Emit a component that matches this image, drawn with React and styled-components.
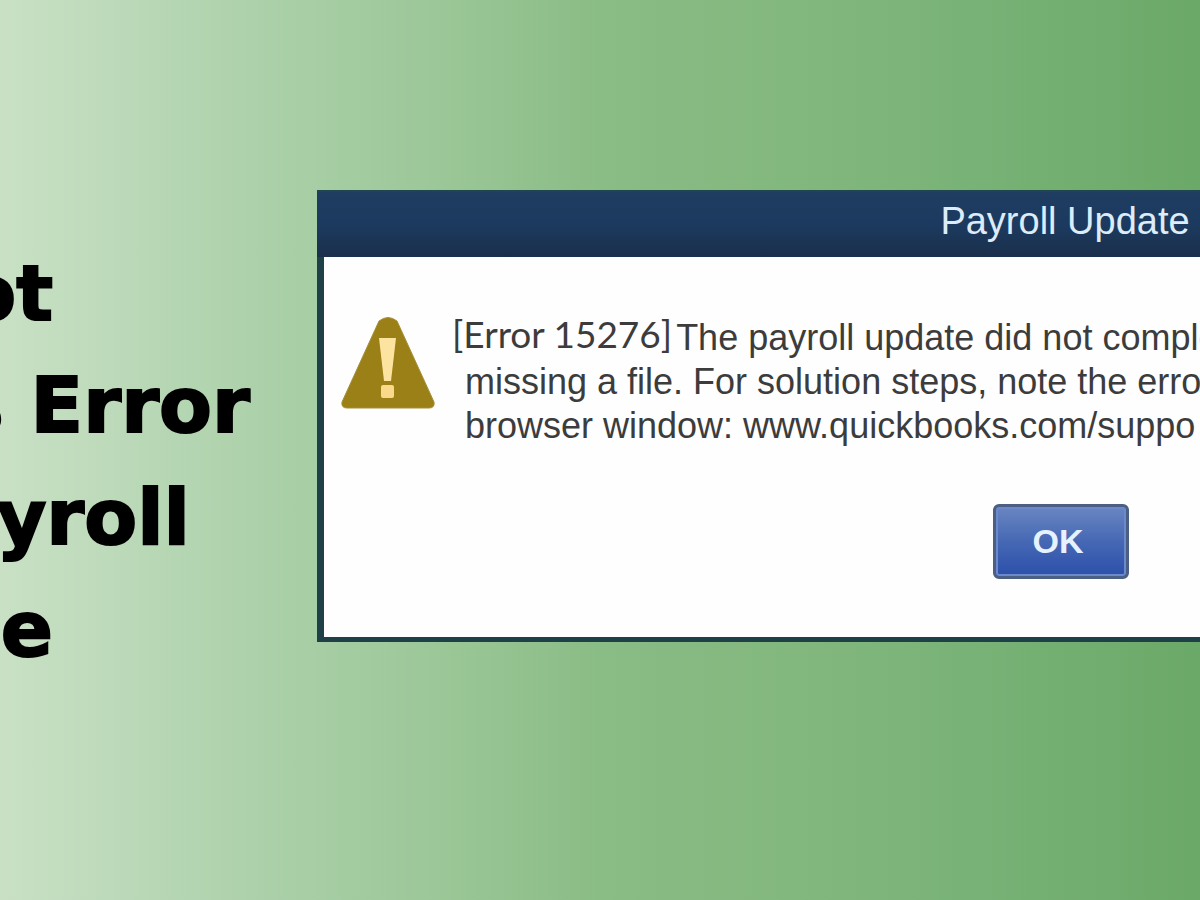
import React from 'react';
import styled, { createGlobalStyle } from 'styled-components';

const GlobalStyle = createGlobalStyle`
  * {
    box-sizing: border-box;
  }

  body {
    margin: 0;
  }
`;

const Banner = styled.main`
  display: flex;
  align-items: flex-start;
  min-height: 100vh;
  overflow: hidden;
  background: linear-gradient(
    to right,
    #c9e0c5 0%,
    #b9d8b6 12%,
    #a9cfa7 24%,
    #9ac696 38%,
    #8abc85 50%,
    #80b67c 70%,
    #75b073 86%,
    #6ba968 100%
  );
`;

const Headline = styled.h1`
  flex: none;
  display: flex;
  flex-direction: column;
  align-items: flex-start;
  width: 317px;
  margin: 0;
  padding-top: 238px;
  overflow: hidden;
  color: #000;
  font-family: 'DejaVu Sans', sans-serif;
  font-size: 77px;
  font-weight: 700;
  line-height: 112px;
  -webkit-text-stroke: 2px #000;
`;

const HeadlineLine = styled.span`
  display: flex;
  justify-content: flex-end;
  width: ${(props) => props.$width}px;
  white-space: pre;
`;

const Dialog = styled.section`
  flex: none;
  width: 124vw;
  margin-top: 190px;
  border: solid #1f4046;
  border-width: 0 7px 5px;
  background: #fefefe;
  font-family: 'Liberation Sans', Arial, sans-serif;
`;

const TitleBar = styled.header`
  margin: 0 -7px;
  padding: 8px 0 14px;
  border-top: 2px solid #1f4650;
  background: linear-gradient(#1e3d61, #1c3a5f 50%, #1b2f4b);
`;

const Title = styled.h2`
  margin: 0;
  padding-left: 8px;
  color: #dcecfb;
  font-size: 38px;
  font-weight: 400;
  line-height: 43px;
  text-align: center;
`;

const Content = styled.div`
  display: flex;
  align-items: flex-start;
  gap: 16px;
  padding: 59px 16px 0;
`;

const WarningIcon = styled.svg`
  flex: none;
  width: 96px;
  height: 94px;
`;

const Message = styled.p`
  margin: 0;
  padding-left: 13px;
  color: #3c3c3c;
  font-size: 36px;
  line-height: 44px;
  white-space: nowrap;
`;

const MessageLine = styled.span`
  display: flex;
  align-items: flex-start;
  gap: 4px;
  margin-left: ${(props) => (props.$outdent ? '-13px' : '0')};
`;

const ErrorCode = styled.span`
  font-family: Lato, 'Liberation Sans', sans-serif;
  font-size: 37px;
  line-height: 36px;
`;

const Actions = styled.footer`
  display: flex;
  justify-content: center;
  padding: 56px 0 58px;
`;

const OkButton = styled.button`
  width: 136px;
  height: 75px;
  padding: 0 6px 0 0;
  border: 3px solid #4a5f83;
  border-radius: 6px;
  background: linear-gradient(#6a86c2, #4668b4 50%, #2c4fab);
  box-shadow: inset 0 0 0 2px #6c8acb;
  color: #e6f2ff;
  font-family: 'Liberation Sans', Arial, sans-serif;
  font-size: 34px;
  font-weight: 700;
`;

const headline = [
  { text: 'ot', width: 53 },
  { text: 's Error', width: 250 },
  { text: 'yroll', width: 190 },
  { text: 'e', width: 53 },
];

const Warning = () => (
  <WarningIcon viewBox="0 0 96 94" aria-hidden="true">
    <path
      d="M39 5 Q48 -2 57 5 L94 86 Q95 92 89 92 H7 Q1 92 2 86 Z"
      fill="#9b8017"
      stroke="#a58f35"
      strokeWidth="1"
    />
    <path d="M39 22 H56 L51 65 H44 Z" fill="#fde3a0" />
    <rect x="41" y="69" width="13" height="13" rx="2" fill="#fbd98a" />
  </WarningIcon>
);

const App = () => {
  return (
    <>
      <GlobalStyle />
      <Banner>
        <Headline>
          {headline.map((line) => (
            <HeadlineLine key={line.text} $width={line.width}>{line.text}</HeadlineLine>
          ))}
        </Headline>
        <Dialog role="dialog" aria-labelledby="dialog-title">
          <TitleBar>
            <Title id="dialog-title">Payroll Update</Title>
          </TitleBar>
          <Content>
            <Warning />
            <Message>
              <MessageLine $outdent>
                <ErrorCode>[Error 15276]</ErrorCode>
                <span>The payroll update did not comple</span>
              </MessageLine>
              <MessageLine>missing a file. For solution steps, note the erro</MessageLine>
              <MessageLine>browser window: www.quickbooks.com/suppo</MessageLine>
            </Message>
          </Content>
          <Actions>
            <OkButton type="button">OK</OkButton>
          </Actions>
        </Dialog>
      </Banner>
    </>
  );
};

export default App;
